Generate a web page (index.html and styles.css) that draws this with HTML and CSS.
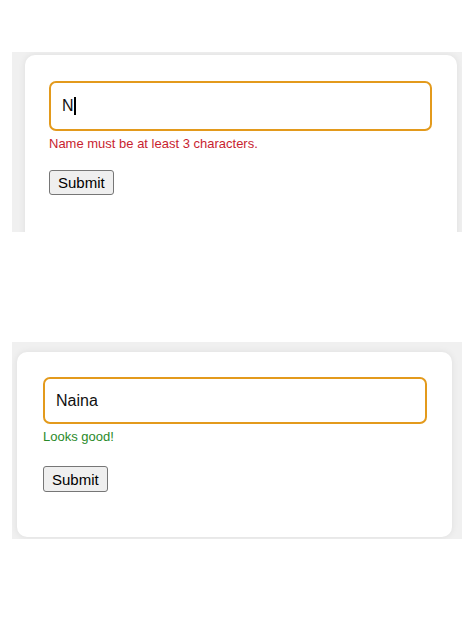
FILE: index.html
```html
<!DOCTYPE html>
<html>
<head>
<meta charset="utf-8">
<link rel="stylesheet" href="styles.css">
</head>
<body>
<section class="shot shot-one">
  <div class="card card-one">
    <div class="field field-one"><span>N</span><span class="caret"></span></div>
    <p class="msg msg-error">Name must be at least 3 characters.</p>
    <button class="submit">Submit</button>
  </div>
</section>
<section class="shot shot-two">
  <div class="card card-two">
    <div class="field field-two"><span>Naina</span></div>
    <p class="msg msg-ok">Looks good!</p>
    <button class="submit submit-two">Submit</button>
  </div>
</section>
</body>
</html>
```
FILE: styles.css
```css
html, body {
  margin: 0;
  padding: 0;
  background: #ffffff;
}
body {
  width: 474px;
  height: 624px;
  font-family: "Liberation Sans", Arial, sans-serif;
  color: #111;
}
.shot {
  box-sizing: border-box;
  margin-left: 12px;
  width: 450px;
  background: #f0f0f0;
  overflow: hidden;
}
.shot-one {
  margin-top: 52px;
  height: 180px;
  padding: 3px 5px 0 13px;
}
.shot-two {
  margin-top: 110px;
  height: 197px;
  padding: 10px 10px 2px 5px;
}
.card {
  box-sizing: border-box;
  background: #ffffff;
  border-radius: 10px;
  box-shadow: 0 0 7px rgba(0, 0, 0, 0.08);
  display: flex;
  flex-direction: column;
  align-items: flex-start;
}
.card-one {
  height: 220px;
  padding: 26px 25px 0 24px;
}
.card-two {
  height: 185px;
  padding: 25px 25px 0 26px;
}
.field {
  box-sizing: border-box;
  width: 100%;
  border: 2.5px solid #e39a1c;
  border-radius: 7px;
  display: flex;
  align-items: center;
  font-size: 16px;
  color: #111;
}
.field-one {
  height: 50px;
  padding-left: 11px;
}
.field-two {
  height: 47px;
  padding-left: 11px;
}
.caret {
  display: inline-block;
  width: 2px;
  height: 18px;
  background: #000;
}
.msg {
  margin: 0;
  font-size: 13px;
  line-height: 16px;
}
.msg-error {
  margin-top: 5px;
  color: #c81e30;
}
.msg-ok {
  margin-top: 5px;
  color: #2a8a2a;
}
.submit {
  font-family: "Liberation Sans", Arial, sans-serif;
  font-size: 15px;
  color: #000;
  background: #efefef;
  border: 1px solid #767676;
  border-radius: 3px;
  height: 25px;
  padding: 0 8px;
  margin-top: 18px;
}
.submit-two {
  height: 26px;
  margin-top: 21px;
}
```
